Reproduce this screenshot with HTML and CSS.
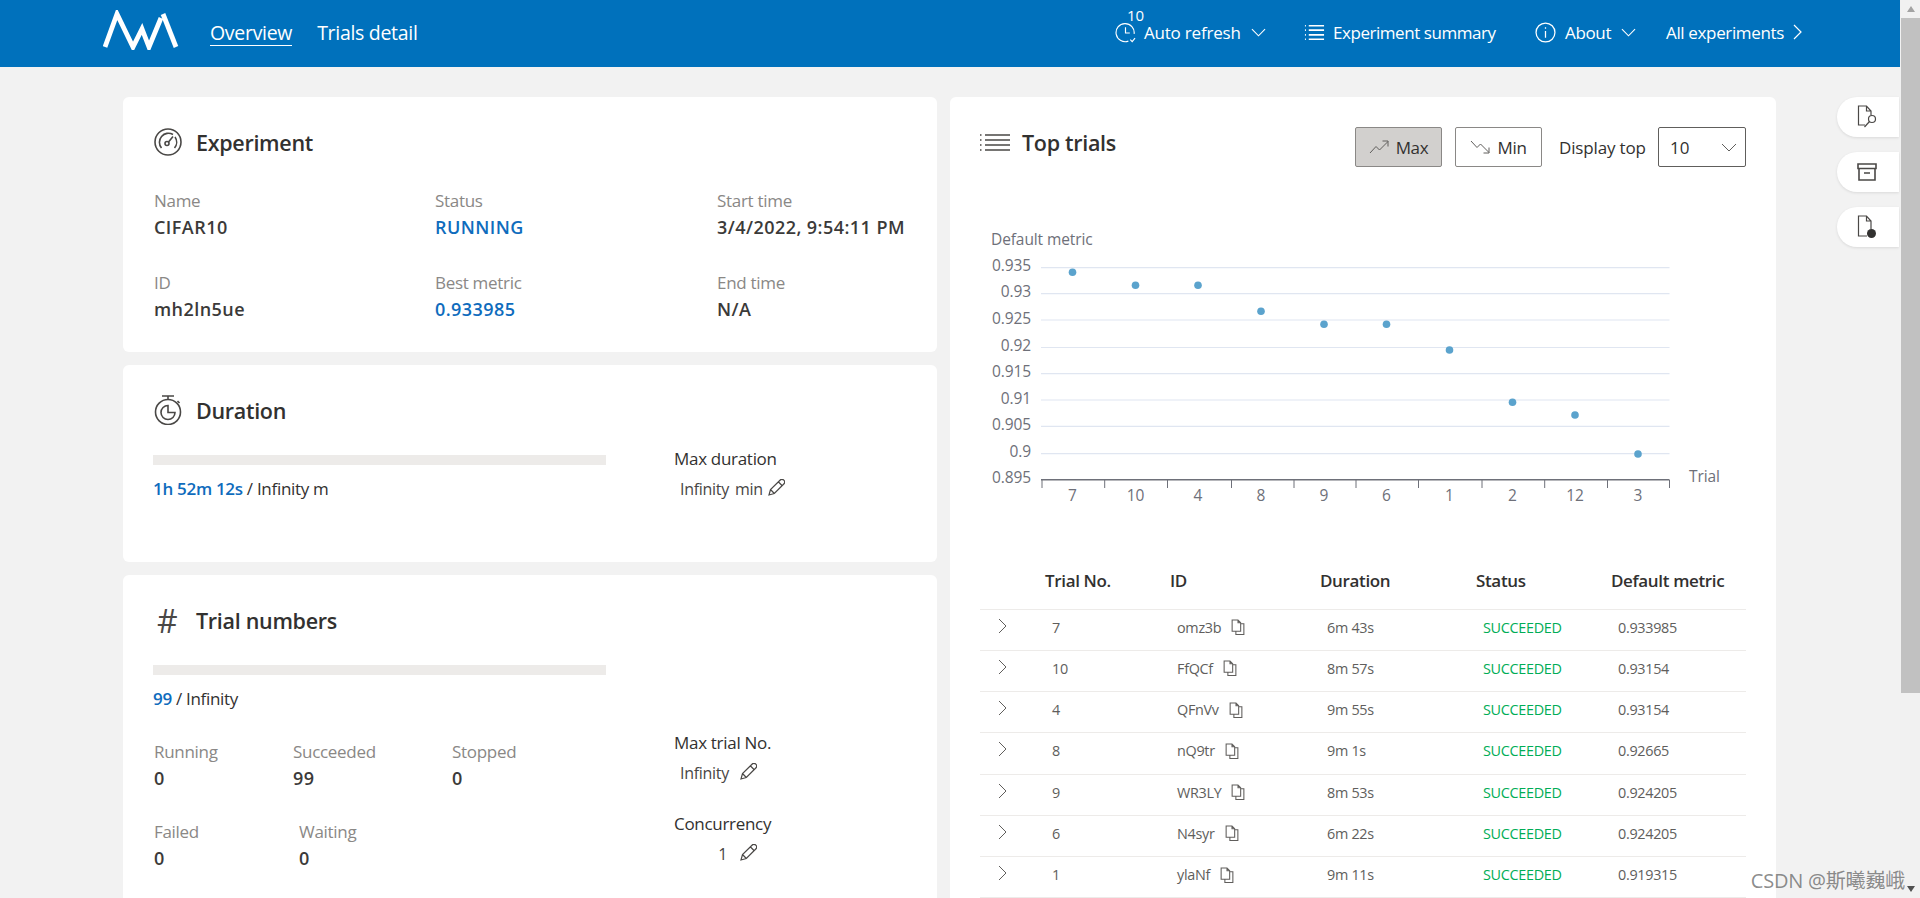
FILE: index.html
```html
<!DOCTYPE html>
<html lang="en">
<head>
<meta charset="utf-8">
<title>NNI Overview</title>
<link rel="stylesheet" href="styles.css">
</head>
<body>
<div class="app">
  <div class="page">
    <header class="topbar">
      <svg class="logo" viewBox="0 0 76 40" aria-hidden="true"><path class="logo-line" d="M2 37 L14 4 L30 37 L39 19 L46 37 L58 8"/><path class="logo-line" d="M60 4 L73 37"/></svg>
      <nav class="tabs">
        <a class="tab tab-active">Overview</a>
        <a class="tab">Trials detail</a>
      </nav>
      <div class="top-actions">
        <div class="action action-refresh">
          <span class="refresh-count">10</span>
          <svg class="top-icon" viewBox="0 0 22 22"><path class="w1" d="M14 20 A9.5 9.5 0 1 1 20 12.5"/><path class="w1" d="M11 5.5 V11.5 H15.5"/><path class="w1" d="M16 18.5 l2 2 l3 -3.5"/></svg>
          <span>Auto refresh</span>
          <svg class="chev-down" viewBox="0 0 16 9"><path class="w1" d="M1 1 L8 8 L15 1"/></svg>
        </div>
        <div class="action action-summary">
          <svg class="top-icon" viewBox="0 0 22 17"><path class="w15" d="M5 1.5 H21 M5 6 H21 M5 11 H21 M5 15.5 H21 M1 1.5 H2 M1 6 H2 M1 11 H2 M1 15.5 H2"/></svg>
          <span>Experiment summary</span>
        </div>
        <div class="action action-about">
          <svg class="top-icon" viewBox="0 0 20 20"><circle class="w1" cx="10" cy="10" r="9"/><path class="w1" d="M10 8.5 V15 M10 5 V6.5"/></svg>
          <span>About</span>
          <svg class="chev-down" viewBox="0 0 16 9"><path class="w1" d="M1 1 L8 8 L15 1"/></svg>
        </div>
        <div class="action action-all">
          <span>All experiments</span>
          <svg class="chev-right" viewBox="0 0 9 16"><path class="w1" d="M1 1 L8 8 L1 15"/></svg>
        </div>
      </div>
    </header>

    <main class="content">
      <div class="left-col">
        <section class="card card-exp">
          <h2 class="card-title">
            <svg class="title-icon" viewBox="0 0 28 28"><circle class="d15" cx="14" cy="14" r="13"/><path class="d15" d="M7.5 20 A9 9 0 0 1 19 6.5 M21 9 A9 9 0 0 1 20.5 20"/><circle class="d15" cx="13" cy="15.5" r="2"/><path class="d15" d="M14.5 14 L19 8.5"/></svg>
            <span>Experiment</span>
          </h2>
          <div class="exp-grid">
            <div class="field"><div class="label">Name</div><div class="value">CIFAR10</div></div>
            <div class="field"><div class="label">Status</div><div class="value value-blue">RUNNING</div></div>
            <div class="field"><div class="label">Start time</div><div class="value">3/4/2022, 9:54:11 PM</div></div>
            <div class="field"><div class="label">ID</div><div class="value">mh2ln5ue</div></div>
            <div class="field"><div class="label">Best metric</div><div class="value value-blue">0.933985</div></div>
            <div class="field"><div class="label">End time</div><div class="value">N/A</div></div>
          </div>
        </section>

        <section class="card card-dur">
          <h2 class="card-title title-tight">
            <svg class="title-icon icon-watch" viewBox="0 0 28 30"><circle class="d15" cx="14" cy="17" r="12.5"/><path class="d15" d="M14 10.5 A7 7 0 1 0 21 17.5 H14 Z"/><path class="d15" d="M8 1 H20 M14 1 V4.5 M23.5 6 L25.5 8"/></svg>
            <span>Duration</span>
          </h2>
          <div class="split">
            <div class="split-main split-main-pad">
              <div class="bar"></div>
              <div class="progress-text"><span class="blue">1h 52m 12s</span> / Infinity m</div>
            </div>
            <div class="split-side">
              <div class="side-label">Max duration</div>
              <div class="side-value">
                <span>Infinity</span><span class="unit">min</span>
                <svg class="pencil" viewBox="0 0 17 17"><path class="d1" d="M1 16 L2.5 10.5 L12 1.2 A2 2 0 0 1 15.8 5 L6.3 14.5 Z M2.5 10.5 L6.3 14.5 M10.5 3 L14 6.5"/></svg>
              </div>
            </div>
          </div>
        </section>

        <section class="card card-num">
          <h2 class="card-title title-trial">
            <span class="hash">#</span>
            <span>Trial numbers</span>
          </h2>
          <div class="split">
            <div class="split-main">
              <div class="bar"></div>
              <div class="progress-text"><span class="blue">99</span> / Infinity</div>
              <div class="stats stats-first">
                <div class="stat stat-a"><div class="label">Running</div><div class="value">0</div></div>
                <div class="stat stat-b"><div class="label">Succeeded</div><div class="value">99</div></div>
                <div class="stat"><div class="label">Stopped</div><div class="value">0</div></div>
              </div>
              <div class="stats">
                <div class="stat stat-c"><div class="label">Failed</div><div class="value">0</div></div>
                <div class="stat"><div class="label">Waiting</div><div class="value">0</div></div>
              </div>
            </div>
            <div class="split-side side-trial">
              <div class="side-label">Max trial No.</div>
              <div class="side-value">
                <span class="val-fixed">Infinity</span>
                <svg class="pencil" viewBox="0 0 17 17"><path class="d1" d="M1 16 L2.5 10.5 L12 1.2 A2 2 0 0 1 15.8 5 L6.3 14.5 Z M2.5 10.5 L6.3 14.5 M10.5 3 L14 6.5"/></svg>
              </div>
              <div class="side-label side-gap">Concurrency</div>
              <div class="side-value">
                <span class="val-fixed val-right">1</span>
                <svg class="pencil" viewBox="0 0 17 17"><path class="d1" d="M1 16 L2.5 10.5 L12 1.2 A2 2 0 0 1 15.8 5 L6.3 14.5 Z M2.5 10.5 L6.3 14.5 M10.5 3 L14 6.5"/></svg>
              </div>
            </div>
          </div>
        </section>
      </div>

      <section class="card card-top">
        <div class="top-head">
          <svg class="list-icon" viewBox="0 0 31 18"><path class="d15" d="M6 2 H31 M6 7 H31 M6 12 H31 M6 17 H31 M1 2 H2.5 M1 7 H2.5 M1 12 H2.5 M1 17 H2.5"/></svg>
          <h2 class="top-title">Top trials</h2>
          <div class="controls">
            <button class="btn btn-on">
              <svg class="btn-icon" viewBox="0 0 20 14"><path class="d-thin" d="M1 13 L7 6.5 L10.5 10 L19 1.5 M13.5 1 H19 V6.5"/></svg>
              <span>Max</span>
            </button>
            <button class="btn">
              <svg class="btn-icon" viewBox="0 0 20 14"><path class="d-thin" d="M1 1 L7 7.5 L10.5 4 L19 12.5 M13.5 13 H19 V7.5"/></svg>
              <span>Min</span>
            </button>
            <span class="display-top">Display top</span>
            <div class="select">
              <span>10</span>
              <svg class="select-chev" viewBox="0 0 16 9"><path class="d-thin" d="M1 1 L8 8 L15 1"/></svg>
            </div>
          </div>
        </div>

        <svg class="chart" viewBox="0 0 766 300" role="img">
          <text class="ct" x="11" y="25">Default metric</text>
          <g class="grid">
            <path d="M61 47.7 H689.5 M61 73.7 H689.5 M61 100 H689.5 M61 127.5 H689.5 M61 153.7 H689.5 M61 180 H689.5 M61 206.3 H689.5 M61 233.7 H689.5"/>
          </g>
          <g class="ct ct-end">
            <text x="51" y="51">0.935</text>
            <text x="51" y="77">0.93</text>
            <text x="51" y="104">0.925</text>
            <text x="51" y="131">0.92</text>
            <text x="51" y="157">0.915</text>
            <text x="51" y="184">0.91</text>
            <text x="51" y="210">0.905</text>
            <text x="51" y="237">0.9</text>
            <text x="51" y="263">0.895</text>
          </g>
          <path class="axis" d="M61 259.7 H689.5"/>
          <path class="tick" d="M62 260 v8 M124.7 260 v8 M187.5 260 v8 M251.5 260 v8 M314 260 v8 M376 260 v8 M438.5 260 v8 M502 260 v8 M564.7 260 v8 M627.5 260 v8 M689.5 260 v8"/>
          <g class="ct ct-mid">
            <text x="92.5" y="281">7</text>
            <text x="155.5" y="281">10</text>
            <text x="218" y="281">4</text>
            <text x="281" y="281">8</text>
            <text x="344" y="281">9</text>
            <text x="406.5" y="281">6</text>
            <text x="469.5" y="281">1</text>
            <text x="532.5" y="281">2</text>
            <text x="595" y="281">12</text>
            <text x="658" y="281">3</text>
          </g>
          <text class="ct" x="709" y="262">Trial</text>
          <g class="dots">
            <circle cx="92.5" cy="52.3" r="3.8"/>
            <circle cx="155.5" cy="65.3" r="3.8"/>
            <circle cx="218" cy="65.3" r="3.8"/>
            <circle cx="281" cy="91.3" r="3.8"/>
            <circle cx="344" cy="104.3" r="3.8"/>
            <circle cx="406.5" cy="104.3" r="3.8"/>
            <circle cx="469.5" cy="130" r="3.8"/>
            <circle cx="532.5" cy="182.3" r="3.8"/>
            <circle cx="595" cy="195" r="3.8"/>
            <circle cx="658" cy="234" r="3.8"/>
          </g>
        </svg>

        <table class="trials">
          <colgroup>
            <col class="c-exp"><col class="c-no"><col class="c-id"><col class="c-dur"><col class="c-status"><col>
          </colgroup>
          <thead>
            <tr><th></th><th>Trial No.</th><th>ID</th><th>Duration</th><th>Status</th><th>Default metric</th></tr>
          </thead>
          <tbody>
            <tr><td class="exp"><svg class="row-chev" viewBox="0 0 9 16"><path class="d-thin" d="M1 1 L8 8 L1 15"/></svg></td><td>7</td><td><span class="idc">omz3b<svg class="copy" viewBox="0 0 13 15"><path class="d-thin" d="M1 1 H6.5 L9 3.5 V11.5 H1 Z M6.5 1 V3.5 H9 M9 4.5 H12 V14.5 H4.5 V11.5"/></svg></span></td><td>6m 43s</td><td class="ok">SUCCEEDED</td><td>0.933985</td></tr>
            <tr><td class="exp"><svg class="row-chev" viewBox="0 0 9 16"><path class="d-thin" d="M1 1 L8 8 L1 15"/></svg></td><td>10</td><td><span class="idc">FfQCf<svg class="copy" viewBox="0 0 13 15"><path class="d-thin" d="M1 1 H6.5 L9 3.5 V11.5 H1 Z M6.5 1 V3.5 H9 M9 4.5 H12 V14.5 H4.5 V11.5"/></svg></span></td><td>8m 57s</td><td class="ok">SUCCEEDED</td><td>0.93154</td></tr>
            <tr><td class="exp"><svg class="row-chev" viewBox="0 0 9 16"><path class="d-thin" d="M1 1 L8 8 L1 15"/></svg></td><td>4</td><td><span class="idc">QFnVv<svg class="copy" viewBox="0 0 13 15"><path class="d-thin" d="M1 1 H6.5 L9 3.5 V11.5 H1 Z M6.5 1 V3.5 H9 M9 4.5 H12 V14.5 H4.5 V11.5"/></svg></span></td><td>9m 55s</td><td class="ok">SUCCEEDED</td><td>0.93154</td></tr>
            <tr><td class="exp"><svg class="row-chev" viewBox="0 0 9 16"><path class="d-thin" d="M1 1 L8 8 L1 15"/></svg></td><td>8</td><td><span class="idc">nQ9tr<svg class="copy" viewBox="0 0 13 15"><path class="d-thin" d="M1 1 H6.5 L9 3.5 V11.5 H1 Z M6.5 1 V3.5 H9 M9 4.5 H12 V14.5 H4.5 V11.5"/></svg></span></td><td>9m 1s</td><td class="ok">SUCCEEDED</td><td>0.92665</td></tr>
            <tr><td class="exp"><svg class="row-chev" viewBox="0 0 9 16"><path class="d-thin" d="M1 1 L8 8 L1 15"/></svg></td><td>9</td><td><span class="idc">WR3LY<svg class="copy" viewBox="0 0 13 15"><path class="d-thin" d="M1 1 H6.5 L9 3.5 V11.5 H1 Z M6.5 1 V3.5 H9 M9 4.5 H12 V14.5 H4.5 V11.5"/></svg></span></td><td>8m 53s</td><td class="ok">SUCCEEDED</td><td>0.924205</td></tr>
            <tr><td class="exp"><svg class="row-chev" viewBox="0 0 9 16"><path class="d-thin" d="M1 1 L8 8 L1 15"/></svg></td><td>6</td><td><span class="idc">N4syr<svg class="copy" viewBox="0 0 13 15"><path class="d-thin" d="M1 1 H6.5 L9 3.5 V11.5 H1 Z M6.5 1 V3.5 H9 M9 4.5 H12 V14.5 H4.5 V11.5"/></svg></span></td><td>6m 22s</td><td class="ok">SUCCEEDED</td><td>0.924205</td></tr>
            <tr><td class="exp"><svg class="row-chev" viewBox="0 0 9 16"><path class="d-thin" d="M1 1 L8 8 L1 15"/></svg></td><td>1</td><td><span class="idc">ylaNf<svg class="copy" viewBox="0 0 13 15"><path class="d-thin" d="M1 1 H6.5 L9 3.5 V11.5 H1 Z M6.5 1 V3.5 H9 M9 4.5 H12 V14.5 H4.5 V11.5"/></svg></span></td><td>9m 11s</td><td class="ok">SUCCEEDED</td><td>0.919315</td></tr>
          </tbody>
        </table>
      </section>

      <aside class="side-actions">
        <button class="side-btn">
          <svg class="side-icon" viewBox="0 0 20 24"><path class="d1" d="M8 20 H1.5 V1 H9.5 L14 6 V10 M9.5 1 V6 H14"/><circle class="d1" cx="15" cy="14" r="3.5"/><path class="d1" d="M12.5 16.5 L7.5 22"/></svg>
        </button>
        <button class="side-btn">
          <svg class="side-icon" viewBox="0 0 20 18"><path class="d15" d="M1 1 H19 V5.5 H1 Z M2 5.5 V17 H18 V5.5 M7 10 H13"/></svg>
        </button>
        <button class="side-btn">
          <svg class="side-icon" viewBox="0 0 20 24"><path class="d1" d="M10 21 H1.5 V1 H9.5 L14 6 V14 M9.5 1 V6 H14"/><circle class="dark-fill" cx="14.5" cy="18.5" r="4.5"/></svg>
        </button>
      </aside>
    </main>
  </div>

  <div class="scrollbar">
    <span class="sb-up"></span>
    <span class="sb-thumb"></span>
    <span class="sb-down"></span>
  </div>
  <div class="watermark">CSDN @斯曦巍峨</div>
</div>
</body>
</html>
```
FILE: styles.css
```css
* { box-sizing: border-box; }
html, body { margin: 0; height: 100%; }
body {
  overflow: hidden;
  background: #f2f2f2;
  color: #323130;
  font-family: "Open Sans", "Noto Sans", "Noto Sans CJK SC", sans-serif;
  font-size: 17px;
}
.app { display: flex; height: 898px; position: relative; overflow: hidden; }
.page { width: 1900px; flex: none; }

.w1, .w15 { fill: none; stroke: #fff; stroke-width: 1.2; }
.w15 { stroke-width: 1.6; }
.d1, .d15, .d-thin { fill: none; stroke: #4a4846; stroke-width: 1.2; }
.d15 { stroke-width: 1.6; }
.d-thin { stroke: #605e5c; stroke-width: 1; }
.dark-fill { fill: #323130; }

.topbar {
  height: 67px;
  background: #0071bc;
  color: #fff;
  display: flex;
  align-items: center;
  padding: 0 98px 0 103px;
  font-size: 17px;
  letter-spacing: -.35px;
}
.logo { width: 76px; height: 40px; flex: none; margin-top: -7px; }
.logo-line { fill: none; stroke: #fff; stroke-width: 4.8; stroke-linejoin: miter; }
.tabs { display: flex; gap: 25px; margin-left: 31px; font-size: 19.5px; letter-spacing: -.3px; }
.tab { height: 26px; line-height: 26px; border-bottom: 1.5px solid transparent; margin-top: -1px; }
.tab-active { border-bottom-color: #fff; }
.top-actions { display: flex; margin-left: auto; align-items: center; margin-top: -3px; }
.action { display: flex; align-items: center; position: relative; flex: none; }
.action-refresh { width: 189px; }
.action-summary { width: 231px; }
.action-about { width: 132px; }
.top-icon { width: 21px; height: 21px; flex: none; margin-right: 9px; }
.action-summary .top-icon { height: 17px; margin-right: 8px; }
.action-refresh .top-icon { margin-right: 8px; }
.action-refresh span:not(.refresh-count) { letter-spacing: -.2px; }
.action-summary span { letter-spacing: -.45px; }
.chev-down { width: 15px; height: 9px; margin-left: 10px; margin-top: 1px; }
.chev-right { width: 9px; height: 16px; margin-left: 9px; }
.action-all { margin-left: -1px; }
.refresh-count { position: absolute; left: 12px; top: -15px; font-size: 15px; line-height: 18px; letter-spacing: 0; }

.content { display: flex; align-items: flex-start; padding: 30px 0 0 123px; }
.left-col { width: 814px; flex: none; display: flex; flex-direction: column; gap: 13px; }
.card { background: #fff; border-radius: 6px; padding: 30px; }
.card-exp { height: 255px; }
.card-dur { height: 197px; }
.card-num { height: 400px; }
.card-title { display: flex; align-items: center; margin: 0; height: 30px; font-size: 21.5px; font-weight: 600; color: #323130; letter-spacing: -.3px; }
.title-icon { width: 28px; height: 28px; flex: none; margin-left: 1px; margin-right: 14px; }
.icon-watch { height: 30px; }
.card-exp .card-title { margin-bottom: 31px; }
.title-tight { margin-bottom: 21px; }
.title-trial { margin-bottom: 30px; }
.hash { width: 43px; font-size: 32px; font-weight: 400; padding-left: 4px; color: #4a4846; }
.exp-grid { display: grid; grid-template-columns: 281px 282px 1fr; row-gap: 30px; padding-left: 1px; }
.field, .stat { line-height: 26px; }
.label { color: #8a8886; font-size: 17px; letter-spacing: -.3px; }
.value { color: #3b3a39; font-size: 18px; font-weight: 600; letter-spacing: .45px; white-space: nowrap; }
.value-blue, .blue { color: #0f6cbd; }
.split { display: flex; }
.split-main { width: 453px; flex: none; }
.split-main-pad { padding-top: 9px; }
.split-side { margin-left: 68px; }
.side-trial { margin-top: 65px; }
.bar { height: 10px; background: #edebe9; }
.progress-text { margin-top: 12px; line-height: 24px; font-size: 17px; letter-spacing: -.3px; }
.blue { font-weight: 600; }
.stats { display: flex; padding-left: 1px; }
.stats-first { margin-top: 28px; margin-bottom: 28px; }
.stat-a { width: 139px; }
.stat-b { width: 159px; }
.stat-c { width: 145px; }
.side-label { line-height: 26px; font-size: 17px; letter-spacing: -.3px; }
.side-gap { margin-top: 25px; }
.side-value { display: flex; align-items: center; height: 26px; margin-top: 4px; padding-left: 6px; font-size: 16px; letter-spacing: -.3px; color: #484644; }
.unit { margin-left: 6px; }
.pencil { width: 17px; height: 17px; margin-left: 5px; margin-top: -4px; }
.val-fixed { width: 55px; }
.val-right { text-align: right; padding-right: 8px; }

.card-top { width: 826px; flex: none; margin-left: 13px; height: 820px; padding-bottom: 0; }
.top-head { display: flex; align-items: flex-start; height: 40px; }
.list-icon { width: 31px; height: 18px; flex: none; margin-top: 6px; margin-left: -1px; }
.top-title { margin: 0 0 0 12px; line-height: 32px; font-size: 21.5px; font-weight: 600; letter-spacing: -.3px; }
.controls { display: flex; align-items: center; margin-left: auto; }
.btn {
  display: flex; align-items: center; justify-content: center; gap: 7px;
  width: 87px; height: 40px; margin: 0 13px 0 0; padding: 0;
  background: #fff; border: 1px solid #8a8886; border-radius: 2px;
  font: inherit; letter-spacing: -.3px; color: #323130;
}
.btn-on { background: #d2d0ce; }
.btn-icon { width: 20px; height: 14px; }
.display-top { margin-left: 4px; width: 99px; letter-spacing: -.15px; white-space: nowrap; }
.select {
  display: flex; align-items: center; justify-content: space-between;
  width: 88px; height: 40px; padding: 0 8px 0 11px;
  border: 1px solid #605e5c; border-radius: 2px;
}
.select-chev { width: 16px; height: 9px; }

.chart { display: block; width: 766px; height: 300px; margin-top: 53px; }
.ct { fill: #6e7079; font-size: 15.5px; letter-spacing: -.1px; }
.ct-end { text-anchor: end; }
.ct-mid { text-anchor: middle; }
.grid path { fill: none; stroke: #e0e6f1; stroke-width: 1.2; }
.axis { fill: none; stroke: #6e7079; stroke-width: 1.5; }
.tick { fill: none; stroke: #6e7079; stroke-width: 1; }
.dots circle { fill: #5ba3cd; }

.trials { width: 766px; margin-top: 34px; border-collapse: collapse; table-layout: fixed; }
.c-exp { width: 65px; }
.c-no { width: 125px; }
.c-id { width: 150px; }
.c-dur { width: 156px; }
.c-status { width: 135px; }
.trials th { height: 55px; padding: 0 0 1px; text-align: left; font-size: 17px; font-weight: 600; color: #323130; letter-spacing: -.35px; border-bottom: 1.5px solid #edebe9; white-space: nowrap; }
.trials td { height: 41.25px; padding: 0 0 5px 7px; font-size: 14.4px; color: #605e5c; letter-spacing: -.3px; border-bottom: 1.5px solid #edebe9; white-space: nowrap; }
.trials td.exp { padding: 0 0 8px 18px; }
.row-chev { display: block; width: 9px; height: 16px; }
.idc { display: inline-flex; align-items: center; gap: 10px; }
.copy { width: 14px; height: 16px; }
.trials td.ok { color: #00ad56; }

.side-actions { position: absolute; right: 21px; top: 97px; display: flex; flex-direction: column; gap: 15px; }
.side-btn {
  display: flex; align-items: center; justify-content: center;
  width: 62px; height: 40px; padding: 0 2px 0 0; border: 0; background: #fff;
  border-radius: 20px 0 0 20px;
  box-shadow: 0 1px 3px rgba(0,0,0,.1);
}
.side-icon { width: 20px; height: 24px; }

.scrollbar { width: 20px; flex: none; display: flex; flex-direction: column; background: #f1f1f1; padding-left: 1px; height: 898px; position: relative; }
.sb-up { height: 18px; display: flex; justify-content: center; padding-top: 6px; }
.sb-up::before { content: ""; border: 4px solid transparent; border-top: 0; border-bottom: 6px solid #a3a3a3; height: 0; }
.sb-thumb { height: 675px; background: #c1c1c1; }
.sb-down { margin-top: auto; height: 18px; display: flex; justify-content: center; padding-top: 6px; }
.sb-down::before { content: ""; border: 4px solid transparent; border-bottom: 0; border-top: 6px solid #505050; height: 0; }

.watermark { position: absolute; right: 15px; bottom: 5px; font-size: 20px; line-height: 24px; color: rgba(110,110,110,.8); letter-spacing: -.2px; }
```
